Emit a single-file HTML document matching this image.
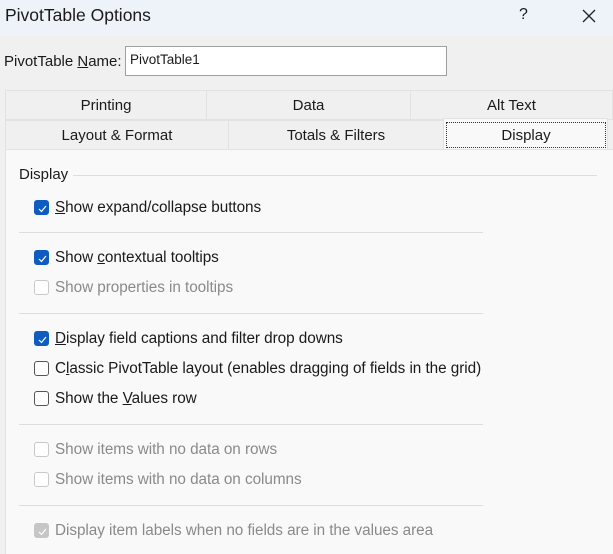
<!DOCTYPE html><html><head><style>
*{margin:0;padding:0;box-sizing:border-box}
body{width:613px;height:554px;background:#f0f0f0;font-family:"Liberation Sans",sans-serif;font-size:14px;color:#1a1a1a;position:relative;overflow:hidden}
.a{position:absolute;white-space:nowrap}
.title{left:0;top:0;width:613px;height:36px;background:#eef3f9}
.tab{position:absolute;height:30px;border:1px solid #e2e2e2;background:#f0f0f0;text-align:center;line-height:30px;font-size:15px}
.panel{left:5px;top:149px;width:608px;height:405px;background:#f9f9f9;border-left:1px solid #e2e2e2;border-top:1px solid #e2e2e2}
.cb{position:absolute;left:34px;width:15px;height:15px;border-radius:3px;border:1px solid #555;background:#fff}
.cb.on{background:#0f5cc0;border-color:#0f5cc0}
.cb.dis{border-color:#c8c8c8}
.cb.dison{background:#c6c6c6;border-color:#c6c6c6}
.cb svg{position:absolute;left:2px;top:2px}
.lbl{left:55px;font-size:15.3px;letter-spacing:-0.05px}
.g{color:#8a8a8a}
.sep{position:absolute;left:19px;width:464px;height:1px;background:#dedede}
</style></head><body>
<div class="a title"></div>
<div class="a" style="left:5px;top:5px;font-size:17.5px">PivotTable Options</div>
<div class="a" style="left:519px;top:6px;font-size:16px">?</div>
<svg class="a" style="left:582px;top:9px" width="14" height="14"><path d="M1 1L13 13M13 1L1 13" stroke="#222" stroke-width="1.3"/></svg>
<div class="a" style="left:4px;top:53px;font-size:15px">PivotTable <u>N</u>ame:</div>
<div class="a" style="left:125px;top:46px;width:322px;height:30px;background:#fff;border:1px solid #a0a0a0;padding:5px 0 0 4px;font-size:13.5px">PivotTable1</div>
<div class="tab" style="left:5px;top:90px;width:202px">Printing</div>
<div class="tab" style="left:206px;top:90px;width:205px">Data</div>
<div class="tab" style="left:410px;top:90px;width:203px">Alt Text</div>
<div class="tab" style="left:5px;top:120px;width:224px">Layout &amp; Format</div>
<div class="tab" style="left:228px;top:120px;width:216px">Totals &amp; Filters</div>
<div class="a panel"></div>
<div class="tab" style="left:443px;top:118px;width:165px;height:31px;background:#f9f9f9;border-bottom:none"><div style="position:absolute;left:2px;top:3px;right:1px;bottom:1px;border:1px dotted #333;line-height:26px">Display</div></div>
<div class="a" style="left:19px;top:166px;font-size:15px">Display</div>
<div class="a" style="left:73px;top:175px;width:524px;height:1px;background:#dedede"></div>

<div class="cb on" style="top:200px"><svg width="11" height="11"><path d="M2 6L4.5 8.5L9 3" stroke="#fff" stroke-width="1.2" fill="none"/></svg></div>
<div class="a lbl" style="top:199px"><u>S</u>how expand/collapse buttons</div>
<div class="sep" style="top:232px"></div>
<div class="cb on" style="top:250px"><svg width="11" height="11"><path d="M2 6L4.5 8.5L9 3" stroke="#fff" stroke-width="1.2" fill="none"/></svg></div>
<div class="a lbl" style="top:249px">Show <u>c</u>ontextual tooltips</div>
<div class="cb dis" style="top:280px"></div>
<div class="a lbl g" style="top:279px">Show properties in tooltips</div>
<div class="sep" style="top:313px"></div>
<div class="cb on" style="top:331px"><svg width="11" height="11"><path d="M2 6L4.5 8.5L9 3" stroke="#fff" stroke-width="1.2" fill="none"/></svg></div>
<div class="a lbl" style="top:330px"><u>D</u>isplay field captions and filter drop downs</div>
<div class="cb" style="top:361px"></div>
<div class="a lbl" style="top:360px">C<u>l</u>assic PivotTable layout (enables dragging of fields in the grid)</div>
<div class="cb" style="top:391px"></div>
<div class="a lbl" style="top:390px">Show the <u>V</u>alues row</div>
<div class="sep" style="top:424px"></div>
<div class="cb dis" style="top:442px"></div>
<div class="a lbl g" style="top:441px">Show items with no data on rows</div>
<div class="cb dis" style="top:472px"></div>
<div class="a lbl g" style="top:471px">Show items with no data on columns</div>
<div class="sep" style="top:505px"></div>
<div class="cb dison" style="top:523px"><svg width="11" height="11"><path d="M2 6L4.5 8.5L9 3" stroke="#fff" stroke-width="1.2" fill="none"/></svg></div>
<div class="a lbl g" style="top:522px">Display item labels when no fields are in the values area</div>
</body></html>
